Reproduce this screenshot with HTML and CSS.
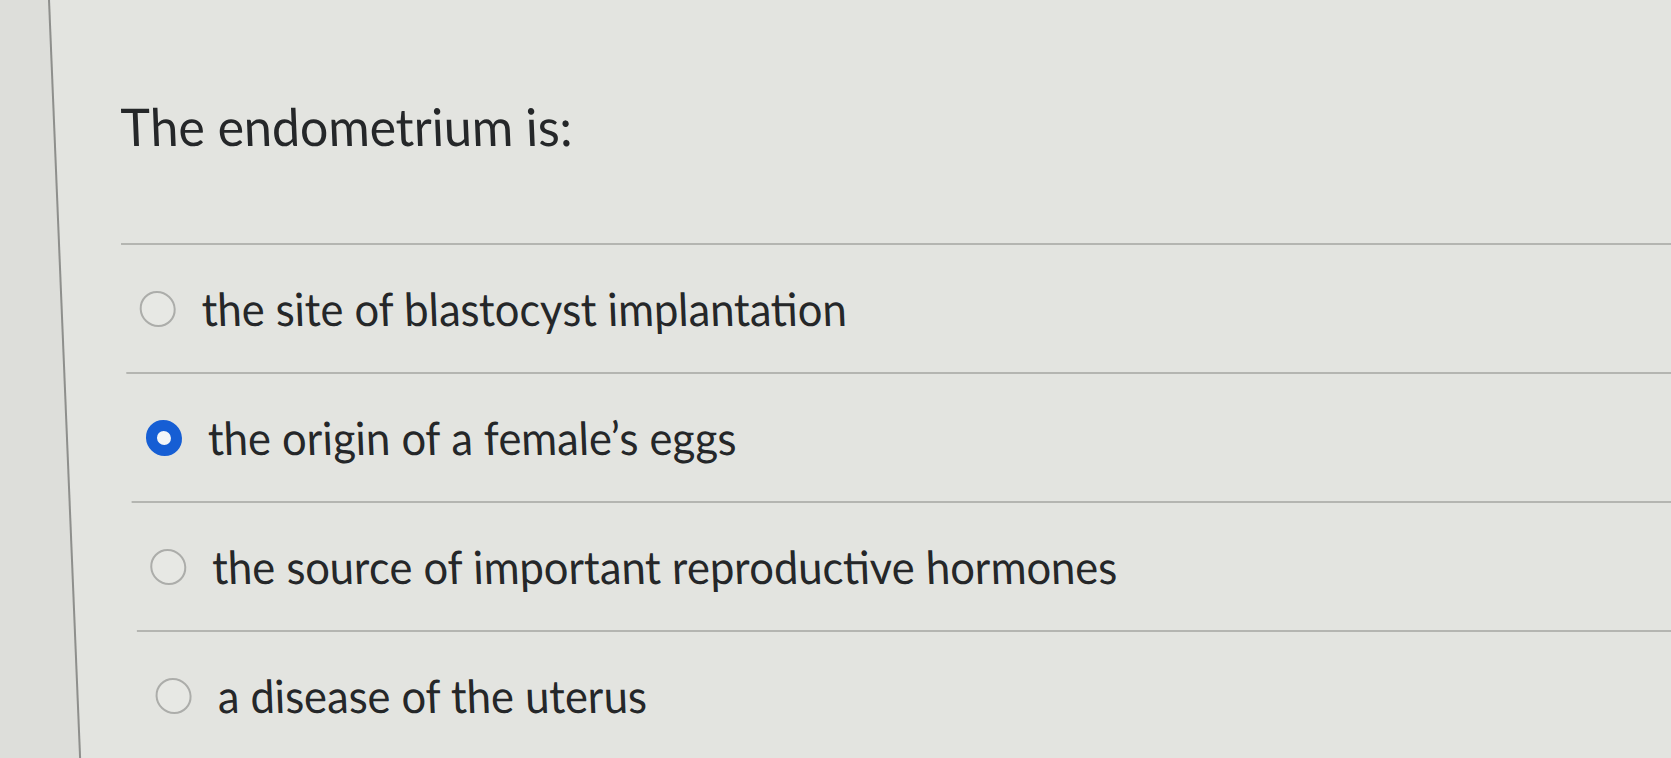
FILE: index.html
```html
<!DOCTYPE html>
<html lang="en">
<head>
<meta charset="utf-8">
<title>Quiz question</title>
<link rel="stylesheet" href="styles.css">
</head>
<body>
<div class="page">
  <div class="rail"></div>
  <main class="question">
    <h1 class="question-text">The endometrium is:</h1>
    <div class="answers">
      <label class="answer">
        <span class="radio"></span>
        <span class="answer-text">the site of blastocyst implantation</span>
      </label>
      <label class="answer">
        <span class="radio radio-selected"></span>
        <span class="answer-text">the origin of a female’s eggs</span>
      </label>
      <label class="answer">
        <span class="radio"></span>
        <span class="answer-text">the source of important reproductive hormones</span>
      </label>
      <label class="answer answer-last">
        <span class="radio"></span>
        <span class="answer-text">a disease of the uterus</span>
      </label>
    </div>
  </main>
</div>
</body>
</html>
```

FILE: styles.css
```css
html, body {
  margin: 0;
  padding: 0;
  height: 100%;
  overflow: hidden;
  background: #e3e4e0;
}

body {
  font-family: Lato, "Open Sans", "Liberation Sans", sans-serif;
  color: #252729;
}

.page {
  display: flex;
  min-height: 100vh;
  transform: skewX(2.35deg);
  transform-origin: 0 0;
}

.rail {
  width: 48px;
  flex: none;
  background: #dddeda;
  border-right: 2px solid #8e8f8c;
  margin-left: -40px;
  padding-left: 40px;
}

.question {
  flex: 1;
  padding-left: 61px;
}

.question-text {
  margin: 0;
  padding: 95px 0 86px 5px;
  font-size: 52px;
  font-weight: 400;
  line-height: 62px;
  transform: scaleX(0.963);
  transform-origin: 0 50%;
}

.answers {
  border-top: 2px solid #b4b5b1;
}

.answer {
  display: flex;
  align-items: center;
  gap: 26px;
  height: 127px;
  padding-left: 16px;
  border-bottom: 2px solid #b4b5b1;
}

.answer-last {
  border-bottom: none;
}

.radio {
  flex: none;
  width: 32px;
  height: 32px;
  border: 2px solid #acadaa;
  border-radius: 50%;
  background: #e7e8e4;
}

.radio-selected {
  width: 14px;
  height: 14px;
  border: 11px solid #165ed4;
  background: #f4f6f8;
  margin-left: 1px;
}

.answer-text {
  display: inline-block;
  font-size: 46px;
  line-height: 56px;
  white-space: nowrap;
  transform: scaleX(0.945);
  transform-origin: 0 50%;
}
```
